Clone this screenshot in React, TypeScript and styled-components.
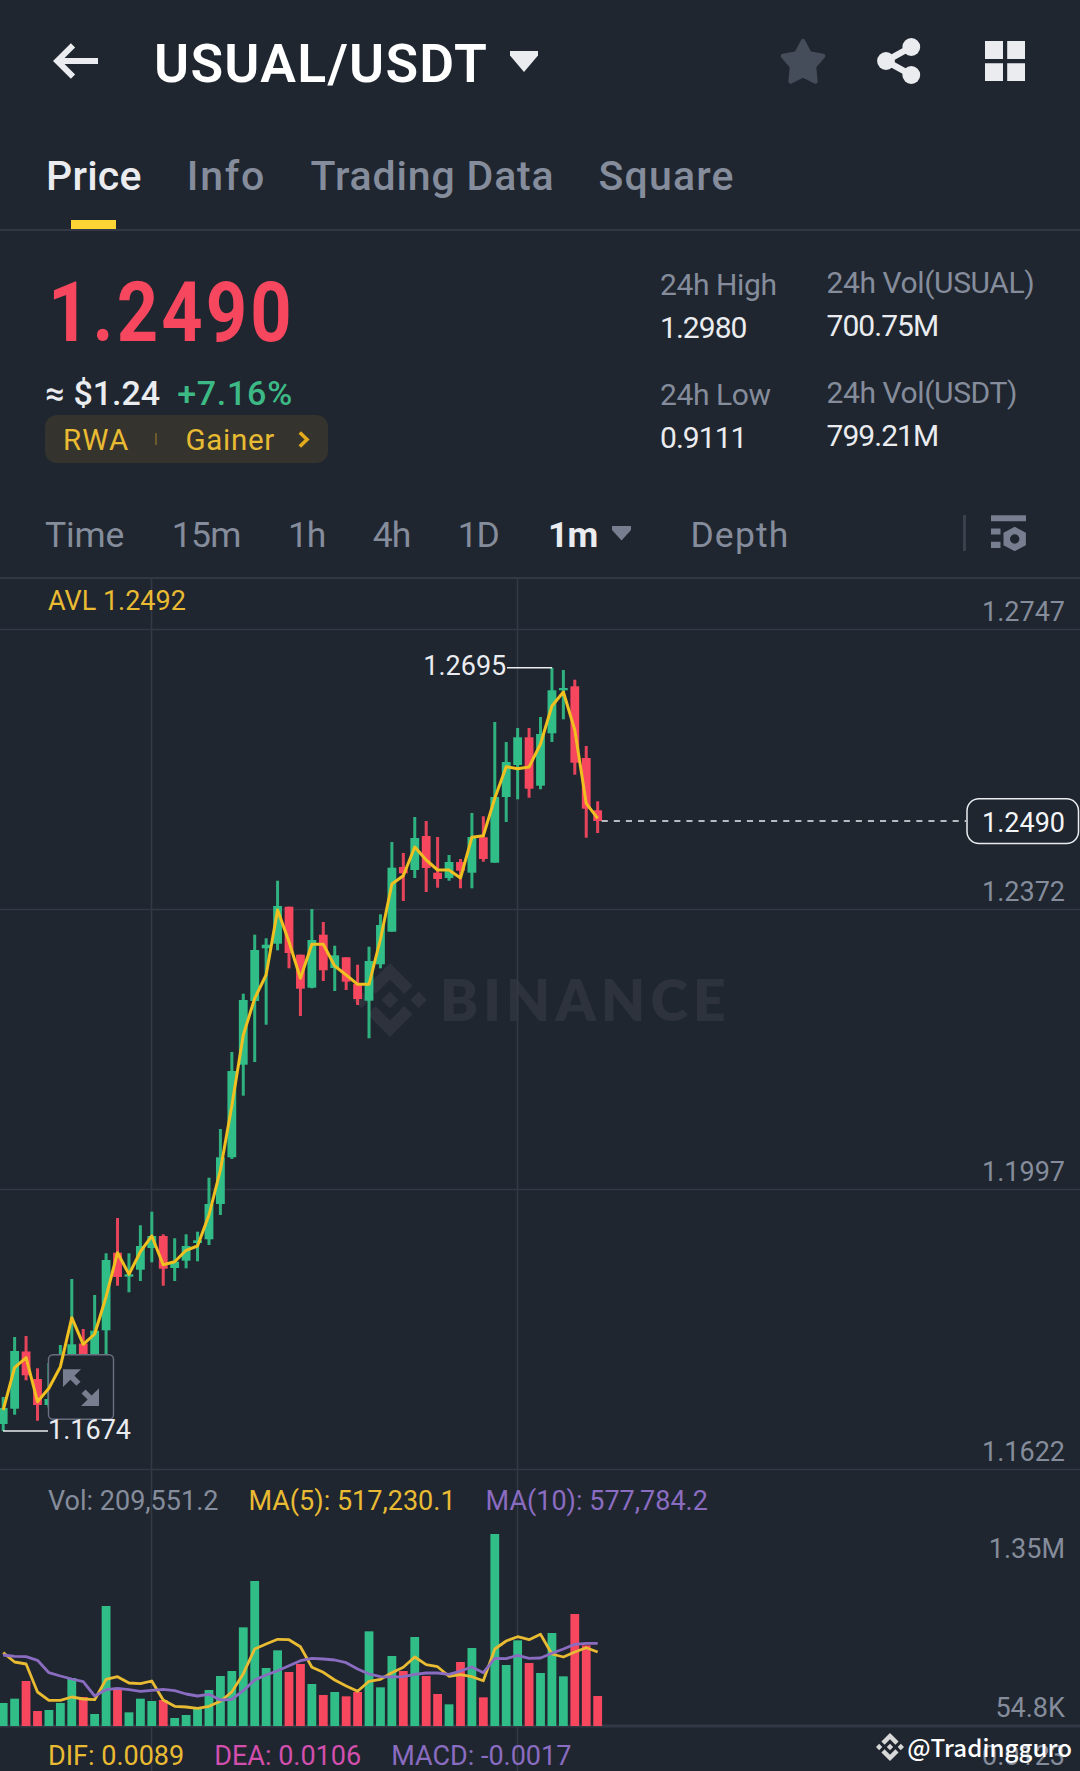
import React from "react";
import styled, { createGlobalStyle } from "styled-components";

const color = {
  bg: "#1f2630",
  line: "#333944",
  text: "#eaecef",
  muted: "#858c9b",
  icon: "#767e8f",
  up: "#31bd87",
  down: "#f6475e",
  yellow: "#e9bb33",
  purple: "#8a6cc0",
  pink: "#d24fae",
};

const GlobalStyle = createGlobalStyle`
  * { box-sizing: border-box; }
  body {
    margin: 0;
    background: ${color.bg};
    font-family: Roboto, "Liberation Sans", sans-serif;
    color: ${color.text};
  }
  svg { display: block; flex: none; }
`;

const Page = styled.main`
  width: 1080px;
  height: 1771px;
  overflow: hidden;
  display: flex;
  flex-direction: column;
  background: ${color.bg};
  white-space: nowrap;
`;

/* ---------- header ---------- */

const Header = styled.header`
  height: 122px;
  flex: none;
  display: flex;
  align-items: center;
  padding: 0 55px 0 52.5px;
`;

const Title = styled.h1`
  margin: 5px 22px 0 56.5px;
  font-size: 53.5px;
  line-height: 64px;
  font-weight: 600;
  letter-spacing: 1.28px;
  color: #fff;
`;

const Actions = styled.div`
  display: flex;
  align-items: center;
  margin-left: auto;
`;

const Action = styled.div<{ $after?: number }>`
  margin-right: ${(p) => p.$after ?? 0}px;
`;

/* ---------- tabs ---------- */

const Tabs = styled.nav`
  height: 109px;
  flex: none;
  display: flex;
  gap: 43px;
  padding-left: 46px;
  border-bottom: 2px solid ${color.line};
`;

const Tab = styled.div<{ $active?: boolean; $tracking: number; $before?: number }>`
  position: relative;
  margin-left: ${(p) => p.$before ?? 0}px;
  font-size: 41px;
  line-height: 108px;
  font-weight: 500;
  letter-spacing: ${(p) => p.$tracking}px;
  color: ${(p) => (p.$active ? color.text : color.muted)};
  ${(p) =>
    p.$active &&
    `&::after {
      content: "";
      position: absolute;
      left: 25px;
      bottom: 0;
      width: 45px;
      height: 9px;
      background: #fcd535;
    }`}
`;

/* ---------- ticker ---------- */

const Ticker = styled.section`
  height: 260px;
  flex: none;
  display: flex;
  padding-left: 45px;
`;

const Quote = styled.div`
  width: 615px;
  padding-top: 33px;
`;

const LastPrice = styled.div`
  padding-left: 3.5px;
  font-size: 83px;
  line-height: 98px;
  font-weight: 700;
  letter-spacing: 3.6px;
  transform: scaleX(0.87);
  transform-origin: left center;
  color: ${color.down};
`;

const Fiat = styled.div`
  display: flex;
  margin-top: 10px;
  font-size: 34px;
  line-height: 42px;
  font-weight: 500;
`;

const Approx = styled.span`
  margin-right: 9px;
`;

const Change = styled.span`
  margin-left: 17px;
  letter-spacing: 0.74px;
  color: #3db986;
`;

const Tags = styled.div`
  display: flex;
  align-items: center;
  width: 282.5px;
  height: 48px;
  margin-top: 1px;
  padding-left: 18px;
  border-radius: 12px;
  background: #35332d;
`;

const Tag = styled.span<{ $tracking: number }>`
  padding-top: 2px;
  font-size: 29.5px;
  line-height: 40px;
  letter-spacing: ${(p) => p.$tracking}px;
  color: ${color.yellow};
`;

const TagDivider = styled.i`
  width: 2px;
  height: 12px;
  margin: 0 28px 0 26px;
  background: #6d5a2c;
`;

const TagArrow = styled.div`
  margin-left: 22.5px;
`;

const StatColumn = styled.div<{ $width?: number; $lift?: number }>`
  width: ${(p) => (p.$width ? `${p.$width}px` : "auto")};
  padding-top: ${(p) => 32.2 - (p.$lift ?? 0)}px;
  display: flex;
  flex-direction: column;
  gap: 23.7px;
`;

const StatLabel = styled.div`
  font-size: 30px;
  line-height: 43px;
  letter-spacing: -0.4px;
  color: ${color.muted};
`;

const StatValue = styled.div`
  font-size: 30px;
  line-height: 43px;
  letter-spacing: -0.96px;
`;

/* ---------- intervals ---------- */

const Intervals = styled.div`
  height: 88px;
  flex: none;
  display: flex;
  align-items: center;
  gap: 47.5px;
  padding-left: 45px;
  border-bottom: 2px solid ${color.line};
`;

const Interval = styled.div<{ $active?: boolean; $tracking?: number; $before?: number }>`
  display: flex;
  align-items: center;
  gap: 14.5px;
  margin-left: ${(p) => p.$before ?? 0}px;
  padding-top: 2px;
  font-size: 35.5px;
  line-height: 44px;
  font-weight: ${(p) => (p.$active ? 700 : 400)};
  letter-spacing: ${(p) => p.$tracking ?? 0}px;
  color: ${(p) => (p.$active ? color.text : color.muted)};
`;

const IntervalCaret = styled.svg`
  margin-top: -4px;
`;

const ChartSettings = styled.div`
  display: flex;
  align-items: center;
  gap: 25.5px;
  margin-left: auto;
  padding: 0 54px 2px 0;
`;

const SettingsDivider = styled.i`
  width: 2.5px;
  height: 36px;
  background: #3a414d;
`;

/* ---------- chart ---------- */

const ChartArea = styled.section`
  position: relative;
  flex: 1;
  display: flex;
  flex-direction: column;
`;

const Canvas = styled.svg`
  position: absolute;
  inset: 0;
  font-family: Roboto, "Liberation Sans", sans-serif;
  font-size: 27px;
`;

const Pane = styled.div<{ $height: number; $top: number }>`
  position: relative;
  height: ${(p) => p.$height}px;
  padding: ${(p) => p.$top}px 0 0 48px;
`;

const Legend = styled.div`
  display: flex;
  gap: 30px;
  font-size: 27px;
  line-height: 32px;
`;

const LegendItem = styled.span<{ $color: string }>`
  color: ${(p) => p.$color};
`;

const Signature = styled.div`
  position: absolute;
  right: 8px;
  bottom: 7px;
  display: flex;
  align-items: center;
  gap: 3px;
  font-family: "Noto Sans CJK SC", "Noto Sans", sans-serif;
  font-size: 24px;
  line-height: 34px;
  font-weight: 500;
  letter-spacing: 0.1px;
  color: #fff;
`;

/* Vertical pixel positions: body top, body bottom, wick top, wick bottom, average line. */
type Candle = ["G" | "R", number, number, number, number, number];

const candles: Candle[] = [
  ["G", 1408, 1424, 1397, 1431, 1410],
  ["G", 1351, 1408.7, 1337, 1414.7, 1367.7],
  ["R", 1351.5, 1375.3, 1336, 1380.3, 1357.7],
  ["R", 1379, 1405, 1368.3, 1420.7, 1401.7],
  ["G", 1399, 1405, 1363, 1407.5, 1388.3],
  ["G", 1362, 1399, 1345, 1402, 1366.7],
  ["G", 1344.3, 1362, 1279, 1370, 1317.7],
  ["R", 1343.5, 1358, 1329, 1365, 1344.3],
  ["G", 1330.7, 1358, 1295, 1365, 1334],
  ["G", 1260, 1330.3, 1253.3, 1356, 1296.7],
  ["R", 1252.7, 1277, 1218, 1285.7, 1252.7],
  ["G", 1274.3, 1276.7, 1253.3, 1292.3, 1274.3],
  ["G", 1246, 1269.7, 1225.3, 1281, 1251.7],
  ["G", 1236, 1248, 1211.7, 1262.3, 1236],
  ["R", 1236, 1268.7, 1234.3, 1285.7, 1264.7],
  ["G", 1261.7, 1268, 1238.3, 1281, 1261.7],
  ["G", 1246, 1260.7, 1234.3, 1268.3, 1250.3],
  ["G", 1240.3, 1243, 1231.7, 1261.3, 1246],
  ["G", 1204, 1239.3, 1177.7, 1245, 1215],
  ["G", 1157.3, 1204, 1129, 1215, 1170],
  ["G", 1071, 1157.3, 1052, 1159, 1106],
  ["G", 1000, 1064.7, 993.7, 1095.7, 1035],
  ["G", 950, 1001, 934.7, 1062, 998.3],
  ["G", 944.7, 948.3, 938.3, 1024.7, 975],
  ["G", 906, 943.7, 880.7, 950.3, 910],
  ["R", 906.7, 953, 906.7, 968.3, 941.7],
  ["R", 954.7, 988.7, 954.7, 1016, 978.3],
  ["G", 940, 987.7, 909, 988.3, 944.3],
  ["R", 934.7, 970.3, 922, 981, 944.3],
  ["G", 955.3, 968, 945.7, 991, 966],
  ["R", 957.3, 981.7, 957.3, 990, 975],
  ["R", 984, 999, 964.7, 1005, 984.3],
  ["G", 961, 1000.7, 946.7, 1038.3, 984.3],
  ["G", 925, 964.3, 914.3, 968.3, 939],
  ["G", 867.7, 931.7, 842, 931.7, 884],
  ["R", 867, 873.3, 853, 901, 875.7],
  ["G", 838, 870, 817, 878, 847],
  ["R", 836, 868, 821, 892, 860],
  ["R", 872.7, 879, 837, 887.7, 870],
  ["G", 862, 878, 855, 880.7, 870],
  ["R", 862, 870.7, 859, 888.3, 878],
  ["G", 837, 872.7, 813, 888.3, 837.3],
  ["R", 837.3, 859, 816.3, 861.7, 835.7],
  ["G", 797, 862.7, 722, 862.7, 798.3],
  ["G", 762, 797, 742, 822, 766.7],
  ["G", 737.3, 765, 728, 799.3, 768.7],
  ["R", 737.3, 788.7, 728, 797.7, 767],
  ["G", 734, 785.7, 717, 789.3, 744],
  ["G", 690.3, 733.3, 667.7, 742, 706],
  ["G", 688, 690.3, 670, 719.3, 692],
  ["R", 686.3, 762.7, 679.7, 774.7, 730],
  ["R", 758, 808.7, 746, 837.7, 803.3],
  ["R", 810.3, 821, 801.3, 833, 818.3],
];

/* Volume pane readings, in thirds of a pixel. */
const volumes = [
  729, 716, 663, 753, 750, 729, 654, 711, 762, 438, 688, 757, 716, 723, 720, 774, 765, 747, 690,
  648, 633, 502, 363, 624, 571, 636, 612, 672, 705, 696, 709, 696, 514, 682, 588, 633, 531, 648,
  702, 733, 606, 564, 712, 222, 615, 541, 609, 639, 519, 649, 462, 556, 708,
];
const ma5 = [
  578, 606, 612, 696, 721, 721, 711, 717, 719, 658, 650, 669, 671, 663, 720, 739, 741, 745, 739,
  724, 696, 641, 567, 552, 538, 539, 560, 622, 637, 660, 678, 694, 664, 658, 638, 622, 591, 614,
  620, 649, 644, 650, 662, 567, 543, 530, 539, 523, 582, 591, 576, 563, 576,
];
const ma10 = [
  585, 589, 590, 601, 638, 648, 657, 665, 708, 689, 685, 689, 694, 691, 688, 692, 702, 708, 703,
  720, 718, 692, 660, 645, 632, 617, 602, 595, 597, 600, 608, 627, 642, 650, 651, 650, 643, 639,
  639, 643, 633, 621, 638, 595, 596, 586, 595, 594, 580, 567, 553, 550, 550,
];

const centerX = (i: number) => 3.2 + i * 11.432;
const volumeY = (v: number) => 1460 + v / 3;
const toPoints = (ys: number[]) => ys.map((y, i) => `${centerX(i).toFixed(1)},${y.toFixed(1)}`).join(" ");

const priceLevels = [
  { y: 629.5, label: "1.2747" },
  { y: 909.5, label: "1.2372" },
  { y: 1189.5, label: "1.1997" },
  { y: 1469.5, label: "1.1622" },
];

const binancePath =
  "M16.624 13.9202l2.7175 2.7154-7.353 7.353-7.353-7.352 2.7175-2.7164 4.6355 4.6595 4.6356-4.6595zm4.6366-4.6366L24 12l-2.7154 2.7164L18.5682 12l2.6924-2.7164zm-9.272.001l2.7163 2.6914-2.7164 2.7174v-.001L9.2721 12l2.7164-2.7154zm-9.2722-.001L5.4088 12l-2.6914 2.6924L0 12l2.7164-2.7164zM11.9885.0115l7.353 7.329-2.7174 2.7154-4.6356-4.6356-4.6355 4.6595-2.7174-2.7154 7.353-7.353z";

function Chart() {
  return (
    <Canvas width="1080" height="1192" viewBox="0 579 1080 1192">
      <g fill="#2d323d">
        <path d={binancePath} transform="translate(353 963) scale(3.083)" />
        <text x="440" y="1020.5" fontFamily="Lato, sans-serif" fontWeight="800" fontSize="57" letterSpacing="5.1">
          BINANCE
        </text>
      </g>

      <g stroke={color.line} strokeWidth="1.6">
        {priceLevels.map((l) => (
          <line key={l.y} x1="0" x2="1080" y1={l.y} y2={l.y} />
        ))}
        <line x1="151.5" x2="151.5" y1="579" y2="1771" />
        <line x1="517.5" x2="517.5" y1="579" y2="1771" />
        <line x1="0" x2="1080" y1="1726" y2="1726" strokeWidth="3" />
      </g>

      <g fill={color.muted} textAnchor="end">
        {priceLevels.map((l) => (
          <text key={l.label} x="1065" y={l.y - 8.5}>
            {l.label}
          </text>
        ))}
        <text x="1065" y="1558">1.35M</text>
        <text x="1065" y="1717">54.8K</text>
        <text x="1065" y="1764.7">0.0123</text>
      </g>

      {candles.map(([dir, top, bottom, high, low], i) => (
        <g key={i} fill={dir === "G" ? color.up : color.down}>
          <rect x={centerX(i) - 1.5} y={high} width="3" height={low - high} opacity="0.92" />
          <rect x={centerX(i) - 4.4} y={top} width="8.8" height={bottom - top} />
        </g>
      ))}

      <rect x="48.5" y="1354.8" width="65" height="64.5" rx="4.5" fill={color.bg} stroke="#6b7080" strokeWidth="1.4" />
      <g fill={color.icon}>
        <path d="M63 1369.3h18l-6.6 6.4 6.1 6.1-4 4-6.1-6.1-7.4 7.4z" />
        <path d="M99 1406h-18l6.6-6.4-6.1-6.1 4-4 6.1 6.1 7.4-7.4z" />
      </g>

      <polyline
        points={toPoints(candles.map((c) => c[5]))}
        fill="none"
        stroke="#f0bf20"
        strokeWidth="3"
        strokeLinejoin="round"
      />

      <g stroke="#eaecef" strokeWidth="1.6">
        <line x1="507" x2="552" y1="667.8" y2="667.8" />
        <line x1="3" x2="48" y1="1431" y2="1431" />
        <line x1="601.7" x2="966" y1="821" y2="821" strokeDasharray="6.1 6" />
      </g>
      <g fill="#eaecef">
        <text x="423.3" y="674.8">1.2695</text>
        <text x="48" y="1439">1.1674</text>
      </g>
      <rect x="967" y="798.7" width="111.5" height="44.8" rx="12" fill={color.bg} stroke="#eaecef" strokeWidth="1.5" />
      <text x="1065" y="832" textAnchor="end" fill="#f4f5f7">
        1.2490
      </text>

      {candles.map(([dir], i) => (
        <rect
          key={i}
          x={centerX(i) - 4.4}
          y={volumeY(volumes[i])}
          width="8.8"
          height={1726 - volumeY(volumes[i])}
          fill={dir === "G" ? color.up : color.down}
        />
      ))}
      <g fill="none" strokeWidth="2.8" strokeLinejoin="round">
        <polyline points={toPoints(ma5.map(volumeY))} stroke="#e8bb33" />
        <polyline points={toPoints(ma10.map(volumeY))} stroke={color.purple} />
      </g>
    </Canvas>
  );
}

const tabs = [
  { label: "Price", tracking: 0.25, active: true },
  { label: "Info", tracking: 1.8, before: 2 },
  { label: "Trading Data", tracking: 0.84, before: 1.5 },
  { label: "Square", tracking: 1.2, before: 1 },
];

const intervals = [
  { label: "Time", tracking: -0.15 },
  { label: "15m", tracking: -0.7 },
  { label: "1h", tracking: -1.2 },
  { label: "4h", tracking: -0.95 },
  { label: "1D", tracking: -1.2 },
];

export default function App() {
  return (
    <Page>
      <GlobalStyle />
      <Header>
        <svg width="45" height="38" viewBox="0 0 45 38" fill="none" stroke={color.text} strokeWidth="6">
          <path d="M20 3.3L4.2 19L20 34.7M5 19H45" />
        </svg>
        <Title>USUAL/USDT</Title>
        <svg width="28" height="21" viewBox="0 0 28 21">
          <path d="M0 0h28v4.5L14 21 0 4.5z" fill={color.text} />
        </svg>
        <Actions>
          <Action $after={51}>
            <svg width="46" height="46" viewBox="0 0 46 46">
              <path
                d="M23 3.2L16.5 15.5 3 18 12 28.6 10.6 43.4 23 37.2 35.4 43.4 34 28.6 43 18 29.5 15.5z"
                fill="#454d5b"
                stroke="#454d5b"
                strokeWidth="4.5"
                strokeLinejoin="round"
              />
            </svg>
          </Action>
          <Action $after={64}>
            <svg width="44" height="46" viewBox="0 0 44 46" fill={color.text}>
              <path d="M34.3 9L9 23l25.3 14" fill="none" stroke={color.text} strokeWidth="6.5" />
              <circle cx="34.3" cy="9" r="8.9" />
              <circle cx="9" cy="23" r="8.9" />
              <circle cx="34.3" cy="37" r="8.9" />
            </svg>
          </Action>
          <Action>
            <svg width="40" height="40" viewBox="0 0 40 40">
              <path d="M0 0h18v18H0zM22.2 0h17.8v18H22.2zM0 22.200h18v17.8H0zM22.2 22.2h17.8v17.8H22.2z" fill={color.text} />
            </svg>
          </Action>
        </Actions>
      </Header>

      <Tabs>
        {tabs.map((t) => (
          <Tab key={t.label} $active={t.active} $tracking={t.tracking} $before={t.before}>
            {t.label}
          </Tab>
        ))}
      </Tabs>

      <Ticker>
        <Quote>
          <LastPrice>1.2490</LastPrice>
          <Fiat>
            <Approx>≈</Approx>
            <span>$1.24</span>
            <Change>+7.16%</Change>
          </Fiat>
          <Tags>
            <Tag $tracking={1.13}>RWA</Tag>
            <TagDivider />
            <Tag $tracking={0.75}>Gainer</Tag>
            <TagArrow>
              <svg width="12" height="17" viewBox="0 0 12 17" fill="none" stroke="#e3ab1c" strokeWidth="3.6">
                <path d="M1.8 1.5L9 8.5L1.8 15.5" />
              </svg>
            </TagArrow>
          </Tags>
        </Quote>
        <StatColumn $width={166.5}>
          <div>
            <StatLabel>24h High</StatLabel>
            <StatValue>1.2980</StatValue>
          </div>
          <div>
            <StatLabel>24h Low</StatLabel>
            <StatValue>0.9111</StatValue>
          </div>
        </StatColumn>
        <StatColumn $lift={1.8}>
          <div>
            <StatLabel>24h Vol(USUAL)</StatLabel>
            <StatValue>700.75M</StatValue>
          </div>
          <div>
            <StatLabel>24h Vol(USDT)</StatLabel>
            <StatValue>799.21M</StatValue>
          </div>
        </StatColumn>
      </Ticker>

      <Intervals>
        {intervals.map((t) => (
          <Interval key={t.label} $tracking={t.tracking}>
            {t.label}
          </Interval>
        ))}
        <Interval $active $before={1.8} $tracking={-0.87}>
          1m
          <IntervalCaret width="19" height="15" viewBox="0 0 19 15">
            <path d="M0 0h19v4L9.5 14.5 0 4z" fill={color.icon} />
          </IntervalCaret>
        </Interval>
        <Interval $before={12} $tracking={1.2}>
          Depth
        </Interval>
        <ChartSettings>
          <SettingsDivider />
          <svg width="35" height="36" viewBox="0 0 35 36" fill={color.icon}>
            <path d="M0 .3h35v6H0zM0 13.6h9.5v5.9H0zM0 26.8h9.5v6.2H0z" />
            <path
              fillRule="evenodd"
              d="M23.7 11.7L34.9 17.8V30.2L23.7 36.2L12.5 30.2V17.8zM23.7 19.3a4.7 4.7 0 1 0 0 9.4a4.7 4.7 0 1 0 0-9.4z"
            />
          </svg>
        </ChartSettings>
      </Intervals>

      <ChartArea>
        <Chart />
        <Pane $height={891} $top={6}>
          <Legend>
            <LegendItem $color={color.yellow}>AVL 1.2492</LegendItem>
          </Legend>
        </Pane>
        <Pane $height={257} $top={14.8}>
          <Legend>
            <LegendItem $color={color.muted}>Vol: 209,551.2</LegendItem>
            <LegendItem $color={color.yellow}>MA(5): 517,230.1</LegendItem>
            <LegendItem $color={color.purple}>MA(10): 577,784.2</LegendItem>
          </Legend>
        </Pane>
        <Pane $height={44} $top={12.5}>
          <Legend>
            <LegendItem $color={color.yellow}>DIF: 0.0089</LegendItem>
            <LegendItem $color={color.pink}>DEA: 0.0106</LegendItem>
            <LegendItem $color={color.purple}>MACD: -0.0017</LegendItem>
          </Legend>
        </Pane>
        <Signature>
          <svg width="28" height="28" viewBox="0 0 24 24" fill="#d8d8d8">
            <path d={binancePath} />
          </svg>
          @Tradingguro
        </Signature>
      </ChartArea>
    </Page>
  );
}
